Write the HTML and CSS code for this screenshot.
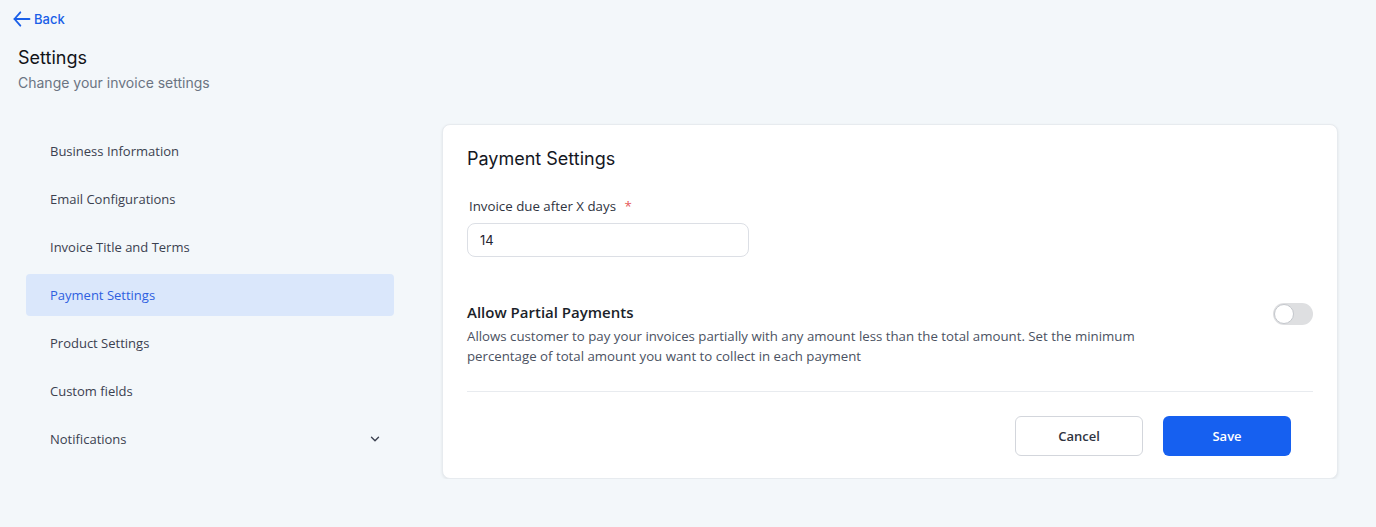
FILE: index.html
```html
<!DOCTYPE html>
<html lang="en">
<head>
    <meta charset="UTF-8">
    <meta name="viewport" content="width=device-width, initial-scale=1.0">
    <title>Settings</title>
    <link rel="stylesheet" href="styles.css">
</head>
<body>
    <div class="page">
        <a class="back-link" href="#">
            <svg width="20" height="20" viewBox="0 0 24 24" fill="none" stroke="currentColor" stroke-width="2.2" stroke-linecap="round" stroke-linejoin="round">
                <path d="M21 12H3"/>
                <path d="M10 4l-7 8 7 8"/>
            </svg>
            <span>Back</span>
        </a>

        <header class="page-header">
            <h1>Settings</h1>
            <p>Change your invoice settings</p>
        </header>

        <div class="layout">
            <nav class="side-menu">
                <a href="#" class="menu-item">Business Information</a>
                <a href="#" class="menu-item">Email Configurations</a>
                <a href="#" class="menu-item">Invoice Title and Terms</a>
                <a href="#" class="menu-item active">Payment Settings</a>
                <a href="#" class="menu-item">Product Settings</a>
                <a href="#" class="menu-item">Custom fields</a>
                <a href="#" class="menu-item">
                    <span>Notifications</span>
                    <svg width="14" height="14" viewBox="0 0 24 24" fill="none" stroke="currentColor" stroke-width="2.4" stroke-linecap="round" stroke-linejoin="round">
                        <path d="M6 9l6 6 6-6"/>
                    </svg>
                </a>
            </nav>

            <section class="card">
                <h2>Payment Settings</h2>

                <div class="field">
                    <label for="due-days">Invoice due after X days <span class="req">*</span></label>
                    <input id="due-days" type="text" value="14">
                </div>

                <div class="option">
                    <div class="option-text">
                        <h3>Allow Partial Payments</h3>
                        <p>Allows customer to pay your invoices partially with any amount less than the total amount. Set the minimum percentage of total amount you want to collect in each payment</p>
                    </div>
                    <span class="toggle"><span class="knob"></span></span>
                </div>

                <div class="actions">
                    <button class="btn btn-cancel">Cancel</button>
                    <button class="btn btn-save">Save</button>
                </div>
            </section>
        </div>
    </div>
</body>
</html>
```

FILE: styles.css
```css
body {
    margin: 0;
    background-color: #f3f7fa;
    font-family: 'Open Sans', 'Noto Sans', sans-serif;
    color: #2f3441;
}
.page {
    padding: 9px 38px 0 12px;
}
.back-link {
    display: inline-flex;
    align-items: center;
    gap: 2px;
    color: #1a5fe8;
    text-decoration: none;
    font-family: 'Inter', sans-serif;
    font-size: 13px;
    font-weight: 500;
}
.page-header {
    padding: 13px 0 0 6px;
}
.page-header h1 {
    margin: 0;
    font-family: 'Inter', sans-serif;
    font-size: 18px;
    font-weight: 400;
    color: #111318;
}
.page-header p {
    margin: 6px 0 0;
    font-family: 'Inter', sans-serif;
    font-size: 14px;
    color: #6b7482;
}
.layout {
    display: flex;
    align-items: flex-start;
    gap: 48px;
    margin-top: 39px;
}
.side-menu {
    display: flex;
    flex-direction: column;
    gap: 6px;
    width: 368px;
    margin-left: 14px;
}
.menu-item {
    display: flex;
    align-items: center;
    justify-content: space-between;
    height: 42px;
    padding: 0 12px 0 24px;
    border-radius: 4px;
    color: #3b4150;
    font-size: 13px;
    text-decoration: none;
}
.menu-item.active {
    background-color: #dae7fb;
    color: #2e5fe0;
}
.card {
    flex: 1;
    margin-top: -6px;
    padding: 23px 24px 22px;
    background: #fff;
    border: 1px solid #e7ebef;
    border-radius: 8px;
    box-shadow: 0 1px 3px rgba(0, 0, 0, 0.08);
}
.card h2 {
    margin: 0;
    font-family: 'Inter', sans-serif;
    font-size: 18px;
    font-weight: 400;
    color: #14171f;
}
.field {
    margin-top: 28px;
}
.field label {
    display: block;
    padding-left: 2px;
    font-size: 13.3px;
    color: #2f3441;
}
.req {
    color: #e5585a;
    margin-left: 5px;
}
.field input {
    display: block;
    box-sizing: border-box;
    width: 282px;
    height: 34px;
    margin-top: 8px;
    padding: 0 12px;
    border: 1px solid #dcdfe5;
    border-radius: 8px;
    font-family: 'Inter', sans-serif;
    font-size: 13px;
    color: #1f2430;
    outline: none;
}
.option {
    display: flex;
    justify-content: space-between;
    align-items: flex-start;
    margin-top: 45px;
    padding-bottom: 25px;
    border-bottom: 1px solid #e8ebef;
}
.option-text h3 {
    margin: 0;
    font-size: 15px;
    font-weight: 600;
    color: #1b1f2a;
}
.option-text p {
    max-width: 690px;
    margin: 4px 0 0;
    font-size: 13.25px;
    line-height: 20px;
    color: #4b5262;
}
.toggle {
    display: block;
    width: 40px;
    height: 22px;
    margin-top: 1px;
    border-radius: 11px;
    background: #dedfe1;
    position: relative;
}
.toggle .knob {
    position: absolute;
    top: 1px;
    left: 1px;
    width: 18px;
    height: 18px;
    border-radius: 50%;
    background: #fff;
    border: 1px solid #c4c7cc;
}
.actions {
    display: flex;
    justify-content: flex-end;
    gap: 20px;
    margin-top: 24px;
    padding-right: 22px;
}
.btn {
    width: 128px;
    height: 40px;
    border-radius: 6px;
    font-family: 'Open Sans', sans-serif;
    font-size: 13px;
    font-weight: 600;
    cursor: pointer;
}
.btn-cancel {
    background: #fff;
    border: 1px solid #d3d6dc;
    color: #2f3441;
}
.btn-save {
    background: #1660f0;
    border: none;
    color: #fff;
}
```
